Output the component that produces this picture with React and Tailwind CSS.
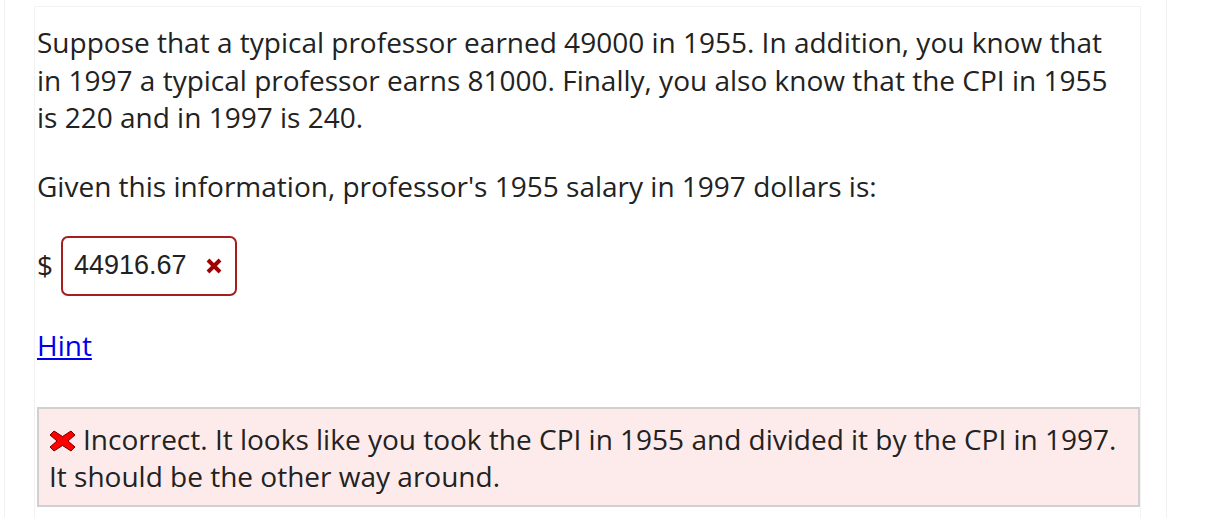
import React from "react";

function RedCross() {
  return (
    <svg width="27" height="22" viewBox="0 0 27 22" className="inline-block align-[-2px] mr-[7px]">
      <path
        d="M5 1 L13.5 6.5 L22 1 L26 5 L19 11 L26 17 L22 21 L13.5 15.5 L5 21 L1 17 L8 11 L1 5 Z"
        fill="#ff0000"
        stroke="#6e0000"
        strokeWidth="1"
        strokeLinejoin="round"
      />
    </svg>
  );
}

export default function App() {
  return (
    <div className="w-[1210px] h-[518px] bg-white overflow-hidden" style={{ fontFamily: '"Open Sans", sans-serif' }}>
      <div className="ml-[4px] w-[1163px] h-full border-l border-r border-[#f1f1f1] pl-[29px] pt-[6px]">
        <div className="w-[1107px] h-[600px] border border-[#f2f2f2] pl-[2px] pr-[1px] pt-[17px] text-[28px] leading-[37.5px] text-[#222]">
          <p className="pr-[20px]">
            Suppose that a typical professor earned 49000 in 1955. In addition, you know that in 1997 a typical professor earns 81000. Finally, you also know that the CPI in 1955 is 220 and in 1997 is 240.
          </p>
          <p className="mt-[31px]">Given this information, professor's 1955 salary in 1997 dollars is:</p>
          <div className="mt-[31px] flex items-center gap-[8px]">
            <span>$</span>
            <div className="h-[60px] w-[176px] border-2 border-[#a51d1d] rounded-[7px] flex items-center pl-[11px] pr-[13px] justify-between">
              <span className="text-[27px]" style={{ fontFamily: '"Liberation Sans", Arial, sans-serif' }}>44916.67</span>
              <svg width="16" height="16" viewBox="0 0 16 16">
                <path d="M2 2 L14 14 M14 2 L2 14" stroke="#a00000" strokeWidth="4" strokeLinecap="butt" />
              </svg>
            </div>
          </div>
          <div className="mt-[31px]">
            <a href="#" className="text-[#0000ee] underline">Hint</a>
          </div>
          <div className="mt-[42px] w-[1103px] border-2 border-[#d0d0d0] bg-[#fdebeb] pl-[10px] pr-[8px] pt-[12px] pb-[9px]">
            <RedCross />
            Incorrect. It looks like you took the CPI in 1955 and divided it by the CPI in 1997. It should be the other way around.
          </div>
        </div>
      </div>
    </div>
  );
}
